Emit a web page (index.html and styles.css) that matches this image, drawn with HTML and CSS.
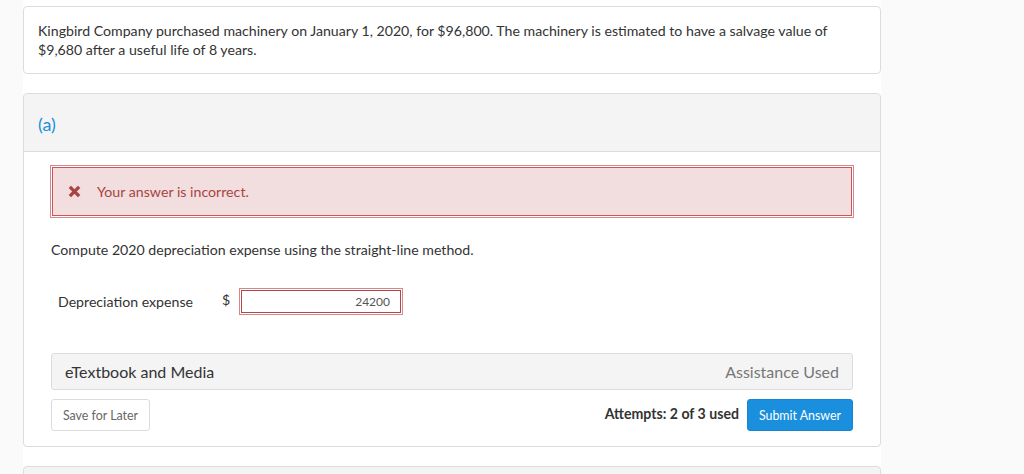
FILE: index.html
```html
<!DOCTYPE html>
<html>
<head>
<meta charset="utf-8">
<link rel="stylesheet" href="styles.css">
</head>
<body>
<div class="column">
  <div class="card intro">
    <p>Kingbird Company purchased machinery on January 1, 2020, for $96,800. The machinery is estimated to have a salvage value of $9,680 after a useful life of 8 years.</p>
  </div>
  <div class="card part">
    <div class="part-head">(a)</div>
    <div class="part-body">
      <div class="alert">
        <svg class="x-icon" viewBox="0 0 14 14" width="13" height="13"><path d="M2 2 L12 12 M12 2 L2 12" stroke="#a94442" stroke-width="3.6" stroke-linecap="butt"/></svg>
        <span>Your answer is incorrect.</span>
      </div>
      <p class="question">Compute 2020 depreciation expense using the straight-line method.</p>
      <div class="answer-row">
        <span class="label">Depreciation expense</span>
        <span class="dollar">$</span>
        <div class="input-wrap"><div class="input">24200</div></div>
      </div>
      <div class="media-bar">
        <span class="media-title">eTextbook and Media</span>
        <span class="assist">Assistance Used</span>
      </div>
      <div class="actions">
        <button class="btn save">Save for Later</button>
        <div class="right">
          <span class="attempts">Attempts: 2 of 3 used</span>
          <button class="btn submit">Submit Answer</button>
        </div>
      </div>
    </div>
  </div>
  <div class="card next"></div>
</div>
</body>
</html>
```
FILE: styles.css
```css
html, body {
  margin: 0;
  padding: 0;
  background: #fafafa;
  height: 100%;
  overflow: hidden;
}
body {
  font-family: Lato, "Open Sans", sans-serif;
  color: #333;
}
.column {
  width: 858px;
  margin-left: 23px;
  padding-top: 6px;
  background: #fff;
  min-height: 474px;
  display: flex;
  flex-direction: column;
  gap: 19px;
}
.card {
  border: 1px solid #dcdcdc;
  border-radius: 4px;
  background: #fff;
}
.intro p {
  margin: 0;
  padding: 14px 40px 14px 14px;
  font-size: 14.15px;
  line-height: 19px;
}
.part-head {
  background: #f4f4f4;
  height: 57px;
  border-bottom: 1px solid #dcdcdc;
  border-radius: 4px 4px 0 0;
  color: #1a8fdb;
  font-size: 18px;
  line-height: 60px;
  padding-left: 14px;
}
.part-body {
  padding: 14px 27px 15px 27px;
}
.alert {
  margin-left: 1px;
  margin-right: 1px;
  height: 49px;
  border: 1px solid #c9565a;
  outline: 1px solid #d9888a;
  outline-offset: 1px;
  background: #f2dede;
  color: #a94442;
  font-size: 14.2px;
  display: flex;
  align-items: center;
  padding-left: 15px;
  box-sizing: border-box;
  margin-top: 1px;
}
.x-icon {
  margin-right: 16px;
}
.question {
  margin: 24px 0 0 0;
  font-size: 14.15px;
  line-height: 20px;
}
.answer-row {
  margin-top: 28px;
  display: flex;
  align-items: center;
  font-size: 14.15px;
}
.label {
  margin-left: 7px;
  width: 164px;
}
.dollar {
  width: 17px;
  margin-top: -4px;
}
.input-wrap {
  border: 1px solid #d08a8c;
  padding: 1px;
}
.input {
  width: 148px;
  height: 21px;
  border: 1px solid #b94448;
  font-size: 12px;
  color: #555;
  text-align: right;
  padding-right: 10px;
  line-height: 21px;
}
.media-bar {
  margin-top: 38px;
  height: 37px;
  box-sizing: border-box;
  border: 1px solid #dcdcdc;
  border-radius: 3px;
  background: #f4f4f4;
  display: flex;
  align-items: center;
  justify-content: space-between;
  padding: 0 13px;
  font-size: 16px;
}
.assist {
  color: #777;
}
.actions {
  margin-top: 9px;
  display: flex;
  justify-content: space-between;
  align-items: center;
}
.right {
  display: flex;
  align-items: center;
  gap: 8px;
}
.btn {
  font-family: Lato, "Open Sans", sans-serif;
  font-size: 12.4px;
  height: 32px;
  border-radius: 3px;
  padding: 0 8px;
  cursor: pointer;
}
.save {
  background: #fff;
  border: 1px solid #dcdcdc;
  color: #666;
  width: 99px;
}
.submit {
  background: #1a8fdd;
  border: 1px solid #1a85cf;
  color: #fff;
  width: 106px;
}
.attempts {
  font-weight: bold;
  font-size: 14.15px;
  color: #333;
  margin-top: -3px;
}
.next {
  height: 40px;
  background: #f4f4f4;
}
```
